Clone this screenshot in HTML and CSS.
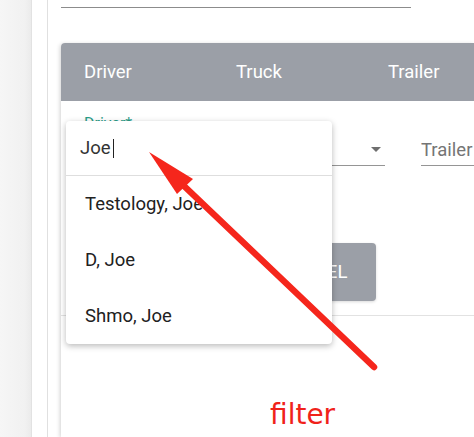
FILE: index.html
```html
<!DOCTYPE html>
<html>
<head>
<meta charset="utf-8">
<link rel="stylesheet" href="styles.css">
</head>
<body>
<div class="page">
  <div class="side1"></div>
  <div class="side2"></div>
  <div class="main">
    <div class="topline"></div>
    <div class="card">
      <div class="head">
        <div>Driver</div>
        <div>Truck</div>
        <div>Trailer</div>
      </div>
      <div class="row">
        <div class="field field-driver">
          <div class="label">Driver*</div>
          <div class="control">
            <span class="value"></span>
            <span class="caret"></span>
          </div>
        </div>
        <div class="field field-trailer">
          <div class="label hidden">Trailer</div>
          <div class="control">
            <span class="placeholder">Trailer</span>
          </div>
        </div>
      </div>
      <div class="actions">
        <button class="btn">CANCEL</button>
      </div>
      <div class="divider"></div>
    </div>
  </div>
</div>

<div class="popup">
  <div class="search"><span class="typed">Joe</span><span class="cursor"></span></div>
  <ul class="options">
    <li>Testology, Joe</li>
    <li>D, Joe</li>
    <li>Shmo, Joe</li>
  </ul>
</div>

<svg class="arrow" width="474" height="437" viewBox="0 0 474 437">
  <line x1="183" y1="185" x2="374" y2="367" stroke="#f5261c" stroke-width="6.5" stroke-linecap="round"/>
  <polygon points="149,152 193,179 177,194" fill="#f5261c"/>
</svg>

<div class="note">filter</div>
</body>
</html>
```

FILE: styles.css
```css
html, body {
  margin: 0;
  padding: 0;
}
body {
  width: 474px;
  height: 437px;
  overflow: hidden;
  position: relative;
  background: #ffffff;
  font-family: Roboto, "Liberation Sans", sans-serif;
}
.page {
  display: flex;
  height: 437px;
  overflow: hidden;
}
.side1 {
  width: 31px;
  flex: none;
  background: linear-gradient(to right, #f6f6f6, #f1f1f1 80%, #ebebeb);
  border-right: 1px solid #e2e2e2;
}
.side2 {
  width: 15px;
  flex: none;
  background: #ffffff;
  border-right: 1px solid #e0e0e0;
}
.main {
  flex: 1;
  min-width: 0;
  padding-left: 13px;
  display: flex;
  flex-direction: column;
}
.topline {
  width: 350px;
  height: 1px;
  margin-top: 7px;
  background: #8c8c8c;
  flex: none;
}
.card {
  margin-top: 35px;
  flex: 1;
  background: #ffffff;
  border-radius: 4px 0 0 0;
  box-shadow: -1px 1px 4px rgba(0, 0, 0, 0.18);
}
.head {
  height: 58px;
  background: #9b9fa7;
  border-radius: 4px 0 0 0;
  display: grid;
  grid-template-columns: 152px 152px 108px;
  padding-left: 23px;
  align-items: center;
  color: #ffffff;
  font-size: 18.5px;
  overflow: hidden;
  white-space: nowrap;
}
.row {
  display: flex;
  padding-top: 14px;
}
.field-driver {
  margin-left: 23px;
  width: 301px;
  flex: none;
}
.field-trailer {
  margin-left: 36px;
  flex: 1;
  min-width: 0;
  overflow: hidden;
  white-space: nowrap;
}
.label {
  font-size: 16px;
  line-height: 18px;
  height: 18px;
  color: #2a9d88;
}
.label.hidden {
  visibility: hidden;
}
.control {
  display: flex;
  align-items: center;
  justify-content: space-between;
  height: 33px;
  padding-top: 1px;
  box-sizing: border-box;
  border-bottom: 1px solid #959595;
  font-size: 18.5px;
  color: #757575;
}
.caret {
  width: 0;
  height: 0;
  border-left: 5px solid transparent;
  border-right: 5px solid transparent;
  border-top: 5px solid #6f6f6f;
  margin-right: 4px;
}
.actions {
  padding-left: 187px;
  margin-top: 77px;
}
.btn {
  display: block;
  width: 128px;
  height: 58px;
  border: none;
  border-radius: 4px;
  background: #9b9fa7;
  color: #ffffff;
  font-family: Roboto, "Liberation Sans", sans-serif;
  font-size: 18.5px;
  font-weight: 400;
  letter-spacing: 0.3px;
  padding: 0;
  box-shadow: 0 1px 3px rgba(0, 0, 0, 0.15);
}
.divider {
  margin-top: 14px;
  height: 1px;
  background: #e2e2e2;
}
.popup {
  position: absolute;
  left: 66px;
  top: 121px;
  width: 266px;
  background: #ffffff;
  border-radius: 4px;
  box-shadow: 0 2px 6px rgba(0, 0, 0, 0.28);
}
.search {
  height: 54px;
  border-bottom: 1px solid #dedede;
  display: flex;
  align-items: center;
  padding-left: 14px;
  font-size: 18.5px;
  color: #333333;
}
.cursor {
  display: inline-block;
  width: 1px;
  height: 19px;
  background: #222222;
  margin-left: 2px;
}
.options {
  list-style: none;
  margin: 0;
  padding: 0;
}
.options li {
  height: 56px;
  line-height: 56px;
  padding-left: 19px;
  font-size: 18.5px;
  color: #212121;
}
.arrow {
  position: absolute;
  left: 0;
  top: 0;
  pointer-events: none;
}
.note {
  position: absolute;
  left: 270px;
  top: 399px;
  font-family: "DejaVu Sans", sans-serif;
  font-size: 28px;
  line-height: 32px;
  color: #f0221a;
}
```
